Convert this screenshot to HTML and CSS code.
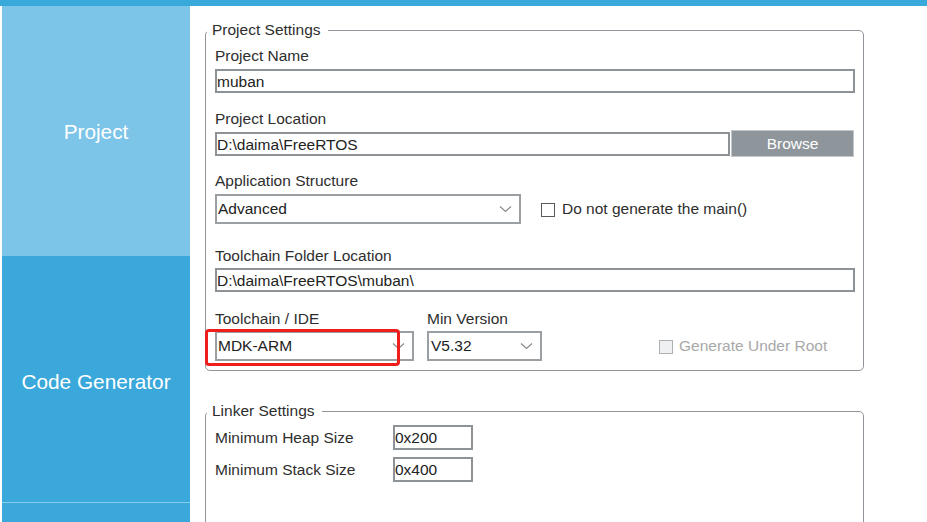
FILE: index.html
```html
<!DOCTYPE html>
<html lang="en">
<head>
<meta charset="utf-8">
<title>Project Manager</title>
<link rel="stylesheet" href="styles.css">
</head>
<body>
<div class="topbar"></div>
<div class="layout">
  <nav class="sidebar">
    <div class="nav-item nav-project">Project</div>
    <div class="nav-item nav-code">Code Generator</div>
    <div class="nav-item nav-more"></div>
  </nav>
  <main class="main">
    <fieldset class="box box-project">
      <legend class="box-title">Project Settings</legend>

      <div class="field field-name">
        <div class="lbl">Project Name</div>
        <div class="input input-wide">muban</div>
      </div>

      <div class="field field-location">
        <div class="lbl lbl-tight">Project Location</div>
        <div class="row">
          <div class="input input-location">D:\daima\FreeRTOS</div>
          <div class="btn">Browse</div>
        </div>
      </div>

      <div class="field field-structure">
        <div class="lbl">Application Structure</div>
        <div class="row row-center">
          <div class="select select-structure">
            <span>Advanced</span>
            <svg class="chev" width="13" height="8" viewBox="0 0 13 8"><polyline points="1,1.5 6.5,6.5 12,1.5" fill="none" stroke="#8a8a8a" stroke-width="1.2"/></svg>
          </div>
          <div class="check">
            <span class="box-check"></span>
            <span>Do not generate the main()</span>
          </div>
        </div>
      </div>

      <div class="field field-folder">
        <div class="lbl lbl-tight">Toolchain Folder Location</div>
        <div class="input input-wide">D:\daima\FreeRTOS\muban\</div>
      </div>

      <div class="field field-toolchain">
        <div class="row row-bottom">
          <div class="col col-ide">
            <div class="lbl lbl-tight">Toolchain / IDE</div>
            <div class="select select-ide">
              <span>MDK-ARM</span>
              <svg class="chev" width="13" height="8" viewBox="0 0 13 8"><polyline points="1,1.5 6.5,6.5 12,1.5" fill="none" stroke="#8a8a8a" stroke-width="1.2"/></svg>
              <div class="highlight"></div>
            </div>
          </div>
          <div class="col col-version">
            <div class="lbl lbl-tight">Min Version</div>
            <div class="select select-version">
              <span>V5.32</span>
              <svg class="chev" width="13" height="8" viewBox="0 0 13 8"><polyline points="1,1.5 6.5,6.5 12,1.5" fill="none" stroke="#8a8a8a" stroke-width="1.2"/></svg>
            </div>
          </div>
          <div class="check check-disabled">
            <span class="box-check"></span>
            <span>Generate Under Root</span>
          </div>
        </div>
      </div>
    </fieldset>

    <fieldset class="box box-linker">
      <legend class="box-title">Linker Settings</legend>
      <div class="linker-row">
        <div class="linker-lbl">Minimum Heap Size</div>
        <div class="input input-small">0x200</div>
      </div>
      <div class="linker-row">
        <div class="linker-lbl">Minimum Stack Size</div>
        <div class="input input-small">0x400</div>
      </div>
    </fieldset>
  </main>
</div>
</body>
</html>
```

FILE: styles.css
```css
* { box-sizing: border-box; }

html, body {
  margin: 0;
  padding: 0;
  background: #ffffff;
  font-family: "Liberation Sans", Arial, sans-serif;
  color: #2e2e2e;
}

.topbar {
  height: 6px;
  background: #39a8da;
}

.layout {
  display: flex;
  height: 516px;
  overflow: hidden;
}

.sidebar {
  width: 188px;
  margin-left: 2px;
  display: flex;
  flex-direction: column;
  flex-shrink: 0;
}

.nav-item {
  display: flex;
  align-items: center;
  justify-content: center;
  color: #ffffff;
  font-size: 20.8px;
}

.nav-project {
  height: 250px;
  background: #7cc5e8;
  padding-top: 2px;
}

.nav-code {
  height: 247px;
  background: #3aa8da;
  border-bottom: 1px solid #86cbec;
  padding-top: 6px;
}

.nav-more {
  flex: 1;
  background: #3aa8da;
}

.main {
  flex: 1;
  padding: 15px 0 0 15px;
}

.box {
  margin: 0;
  width: 659px;
  border: 1px solid #8f959a;
  border-radius: 5px;
  padding: 0 8px 9px 9px;
}

.box-title {
  margin-left: -8px;
  padding: 0 7px 0 5px;
  font-size: 15.5px;
  line-height: 18px;
  color: #2e2e2e;
}

.lbl {
  font-size: 15.5px;
  line-height: 18px;
  margin-bottom: 4px;
  padding-left: 0;
}

.lbl-tight { margin-bottom: 3px; }

.field-name { margin-top: 8px; }
.field-location { margin-top: 17px; }
.field-structure { margin-top: 15px; }
.field-folder { margin-top: 23px; }
.field-toolchain { margin-top: 18px; }

.row {
  display: flex;
  align-items: center;
}

.row-bottom { align-items: flex-end; }

.input {
  height: 24px;
  border: 2px solid #8d9297;
  font-size: 15.5px;
  line-height: 21px;
  padding-left: 0;
  color: #222222;
  white-space: nowrap;
}

.input-wide { width: 640px; }

.input-location { width: 515px; }

.field-location .row { margin-top: -1px; }

.btn {
  margin-left: 1px;
  width: 123px;
  height: 27px;
  background: #8e969c;
  border: 1px solid #c4c8cb;
  color: #ffffff;
  font-size: 15.5px;
  display: flex;
  align-items: center;
  justify-content: center;
}

.select {
  position: relative;
  height: 30px;
  border: 2px solid #9a9fa3;
  display: flex;
  align-items: center;
  justify-content: space-between;
  padding: 0 7px 0 1px;
  font-size: 15.5px;
  color: #222222;
}

.select-structure { width: 306px; }
.select-ide { width: 199px; }
.select-version { width: 115px; padding-left: 2px; }

.col-version { margin-left: 13px; }

.check {
  display: flex;
  align-items: center;
  font-size: 15.5px;
  color: #2e2e2e;
  margin-left: 20px;
}

.box-check {
  width: 14px;
  height: 14px;
  border: 1px solid #555a5e;
  background: #ffffff;
  margin-right: 7px;
  margin-top: 1px;
}

.check-disabled {
  margin-left: 117px;
  height: 30px;
  color: #a8a8a8;
}

.check-disabled .box-check {
  border: 1.5px solid #aeb2b5;
  background: #eef0f2;
  margin-right: 6px;
}

.highlight {
  position: absolute;
  left: -12px;
  top: -4px;
  width: 195px;
  height: 37px;
  border: 3.5px solid #f01d1d;
  border-radius: 4px;
  pointer-events: none;
}

.box-linker {
  margin-top: 31px;
  padding-bottom: 80px;
}

.linker-row {
  display: flex;
  align-items: center;
  margin-top: 5px;
}

.linker-row + .linker-row { margin-top: 7px; }

.linker-lbl {
  width: 178px;
  font-size: 15.5px;
  padding-left: 0;
}

.input-small {
  width: 80px;
  height: 25px;
}
```
